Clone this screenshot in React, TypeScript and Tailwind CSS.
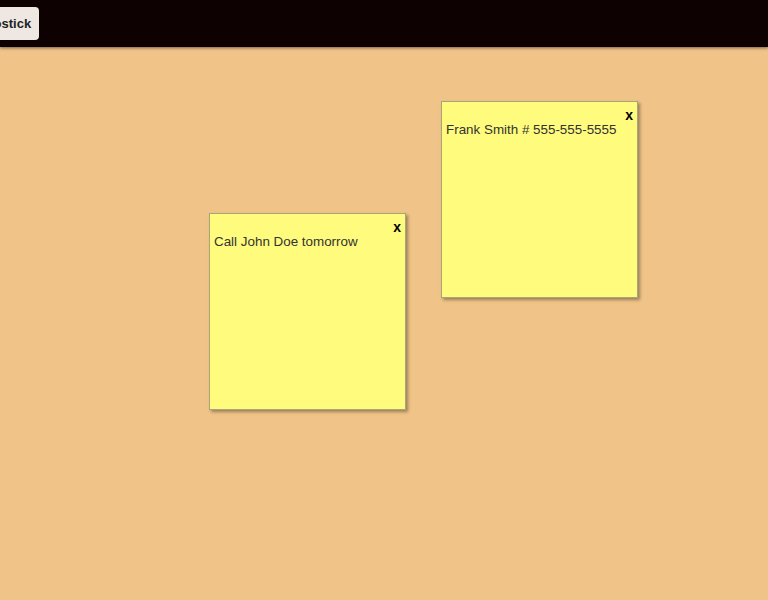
const notes = [
  { id: 1, text: "Frank Smith # 555-555-5555", left: 441, top: 101 },
  { id: 2, text: "Call John Doe tomorrow", left: 209, top: 213 },
];

function Note({ text, left, top }: { text: string; left: number; top: number }) {
  return (
    <div
      className="absolute w-[197px] h-[197px] bg-[#fffb7d] border border-[#a8a57a] shadow-[2px_2px_3px_rgba(0,0,0,0.35)] p-[4px]"
      style={{ left, top }}
    >
      <div className="flex justify-end pt-[2px] h-[16px]">
        <span className="text-[14px] font-bold leading-none text-black">x</span>
      </div>
      <p className="text-[13.4px] leading-[16px] text-[#333]">{text}</p>
    </div>
  );
}

export default function App() {
  return (
    <div className="min-h-[600px] bg-[#f0c388] flex flex-col font-['Liberation_Sans',Arial,sans-serif] overflow-hidden">
      <header className="h-[47px] bg-[#0d0101] flex items-center shadow-[0_1px_3px_rgba(0,0,0,0.5)]">
        <button className="-ml-[52px] h-[33px] px-[8px] rounded-[4px] bg-[#efe7e2] text-[13px] font-bold text-[#222]">
          Add Postick
        </button>
      </header>
      <main className="relative flex-1">
        {notes.map((n) => (
          <Note key={n.id} text={n.text} left={n.left} top={n.top - 47} />
        ))}
      </main>
    </div>
  );
}
